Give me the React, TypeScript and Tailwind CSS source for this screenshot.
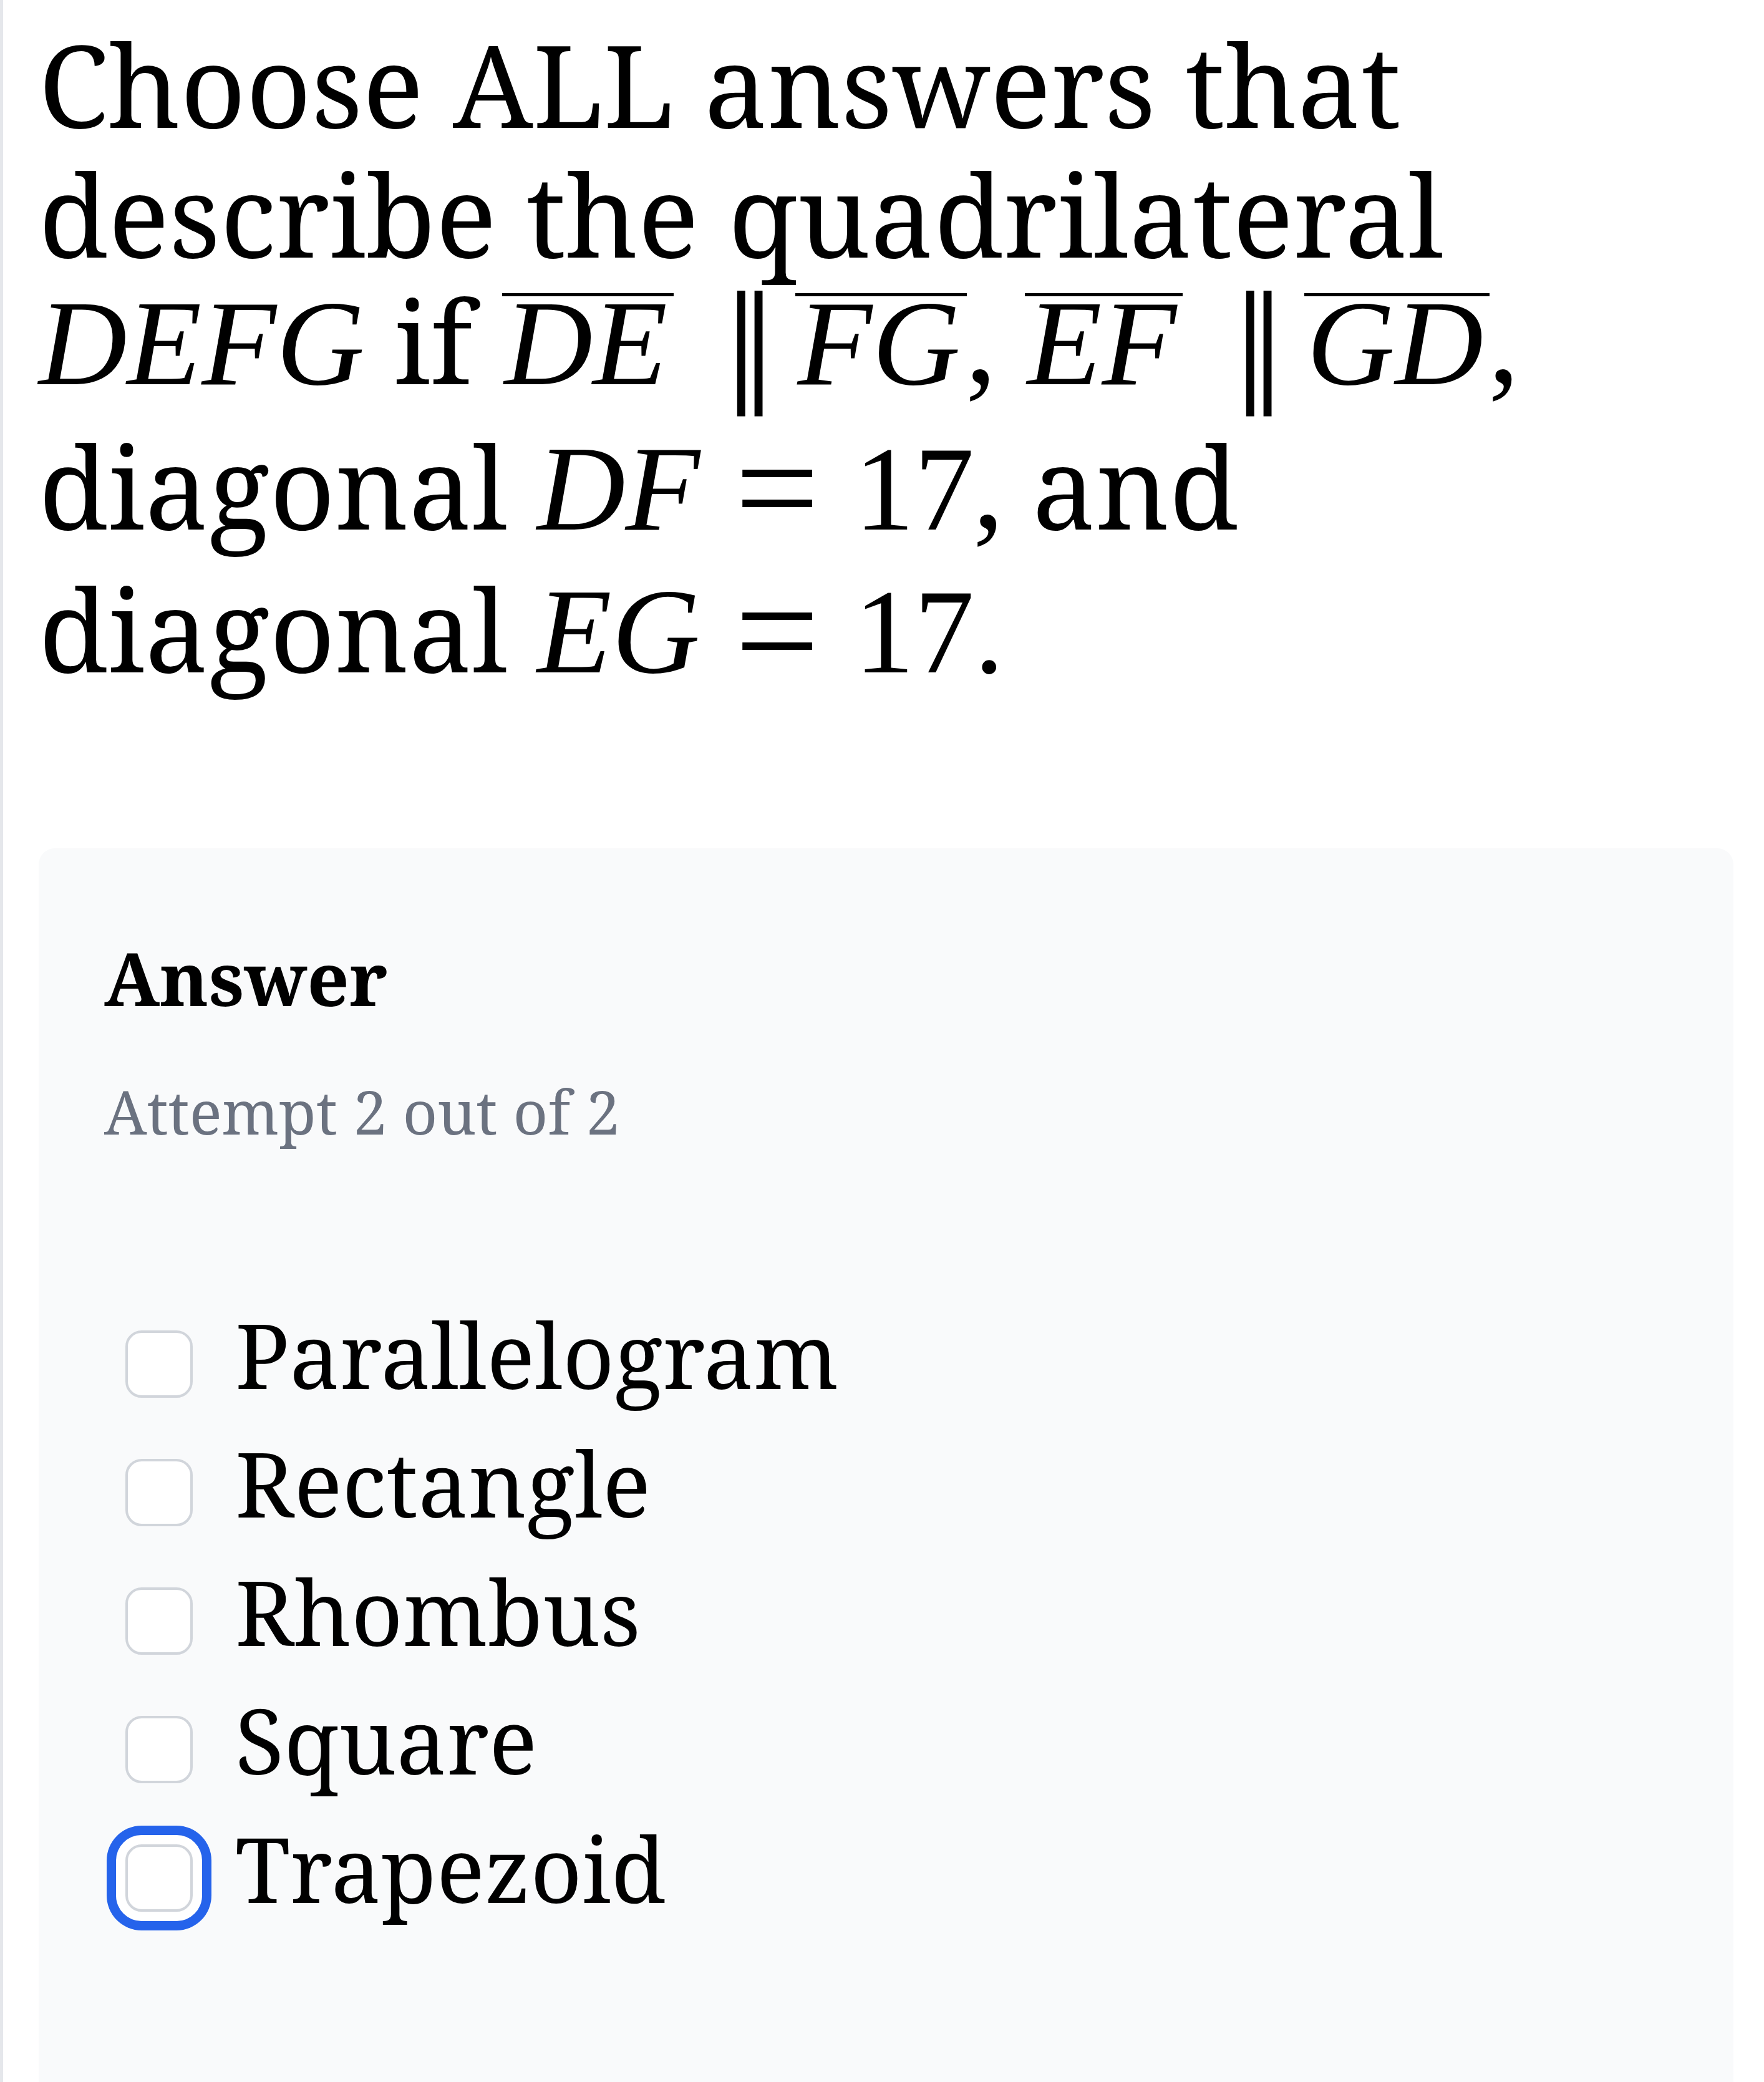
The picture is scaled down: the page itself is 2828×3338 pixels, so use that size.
const text = "font-['Noto_Serif','DejaVu_Serif',serif]";

function M({ children }: { children: React.ReactNode }) {
  return <span className="font-['Liberation_Serif',serif] text-[196px] italic leading-[0]">{children}</span>;
}

function Bar({ children }: { children: React.ReactNode }) {
  return (
    <span className="inline-block border-t-[5px] border-black pl-[4px] pr-[10px] font-['Liberation_Serif',serif] text-[196px] italic leading-[150px]">
      {children}
    </span>
  );
}

function Par() {
  return (
    <span className="ml-[72px] mr-[22px] inline-block scale-x-[0.75] align-[-30px] font-['DejaVu_Serif',serif] text-[218px] leading-[0]">
      ∥
    </span>
  );
}

function Eq() {
  return <span className="mx-[56px] align-[-14px] font-['Liberation_Serif',serif] text-[240px] leading-[0]">=</span>;
}

function Num({ children }: { children: React.ReactNode }) {
  return <span className="font-['Liberation_Serif',serif] text-[192px] leading-[0]">{children}</span>;
}

const options = ["Parallelogram", "Rectangle", "Rhombus", "Square", "Trapezoid"];

export default function App() {
  return (
    <div className={`${text} min-h-screen border-l-[5px] border-[#e5e7eb] bg-white pl-[57px] pr-[49px] pt-[31px] text-black`}>
      <div className="whitespace-nowrap text-[182px] leading-[206px]">
        <div className="h-[208px]">Choose ALL answers that</div>
        <div className="h-[203px]">describe the quadrilateral</div>
        <div className="h-[233px]">
          <M>DEFG</M> if <Bar>DE</Bar>
          <Par />
          <Bar>FG</Bar>, <Bar>EF</Bar>
          <Par />
          <Bar>GD</Bar>,
        </div>
        <div className="h-[229px]">
          diagonal <M>DF</M>
          <Eq />
          <Num>17</Num>, and
        </div>
        <div className="h-[206px]">
          diagonal <M>EG</M>
          <Eq />
          <Num>17.</Num>
        </div>
      </div>

      <section className="mt-[250px] min-h-[2100px] rounded-[26px] bg-[#f9fafb] pl-[105px] pt-[133px]">
        <h2 className="text-[118px] font-bold leading-[150px]">Answer</h2>
        <p className="mt-[78px] text-[97px] leading-[120px] text-[#6b7280]">Attempt 2 out of 2</p>
        <ul className="mt-[227px] pl-[34px]">
          {options.map((o, i) => (
            <li key={o} className="flex h-[206px] items-center gap-[68px]">
              <span
                className={
                  i === 4
                    ? "mt-[32px] h-[108px] w-[108px] shrink-0 rounded-[26px] border-[4px] border-[#d1d5db] bg-white ring-[15px] ring-[#2563eb] ring-offset-[15px] ring-offset-white"
                    : "mt-[32px] h-[108px] w-[108px] shrink-0 rounded-[26px] border-[4px] border-[#d1d5db] bg-white"
                }
              />
              <span className="text-[144px] leading-[206px]">{o}</span>
            </li>
          ))}
        </ul>
      </section>
    </div>
  );
}
